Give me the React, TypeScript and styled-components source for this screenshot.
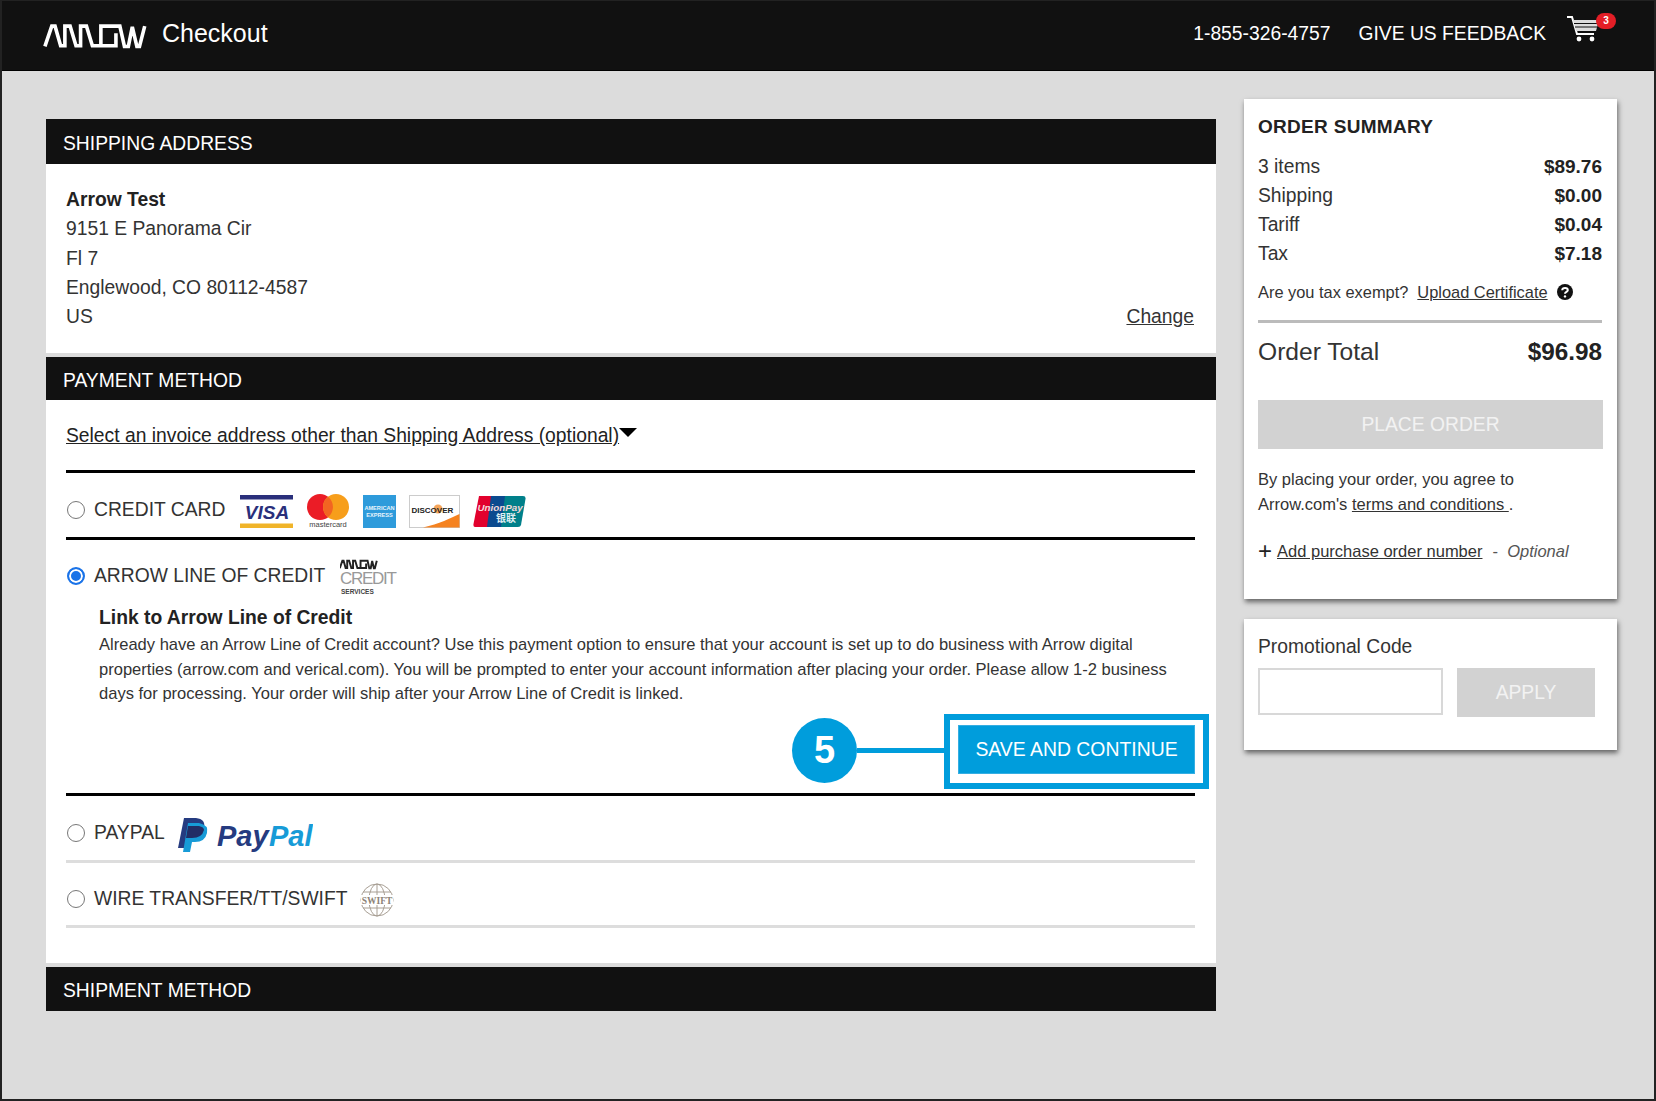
import styled, { createGlobalStyle } from 'styled-components';

const GlobalStyle = createGlobalStyle`
  html, body {
    margin: 0;
    padding: 0;
    background: #dcdcdc;
  }
  * {
    box-sizing: border-box;
  }
`;

const Page = styled.div`
  width: 1656px;
  height: 1101px;
  background: #dcdcdc;
  border: 2px solid #222;
  border-top: 1px solid #222;
  font-family: 'Liberation Sans', Arial, sans-serif;
  color: #333;
  overflow: hidden;
`;

const TopBar = styled.header`
  height: 70px;
  background: #111;
  border-bottom: 1px solid #000;
  display: flex;
  align-items: center;
  padding: 0 38px 4px 38px;
  color: #fff;
`;

const Brand = styled.div`
  font-size: 25px;
  margin-left: 14px;
`;

const TopLinks = styled.div`
  margin-left: auto;
  display: flex;
  align-items: center;
  font-size: 19.3px;
  gap: 28px;
`;

const CartWrap = styled.div`
  position: relative;
  width: 50px;
  height: 34px;
  margin: -4px 0 0 -8px;
`;

const CartBadge = styled.span`
  position: absolute;
  top: -2px;
  right: 0;
  width: 20px;
  height: 16px;
  border-radius: 8px;
  background: #e31e26;
  font-size: 10px;
  font-weight: 700;
  line-height: 16px;
  text-align: center;
  color: #fff;
`;

const Columns = styled.div`
  display: flex;
  align-items: flex-start;
  padding: 28px 0 0 44px;
  gap: 28px;
`;

const MainColumn = styled.main`
  width: 1170px;
  padding-top: 20px;
`;

const SectionBar = styled.h2<{ $height: number }>`
  margin: 0;
  height: ${(p) => p.$height}px;
  background: #111;
  color: #fff;
  font-size: 19.3px;
  font-weight: 400;
  line-height: ${(p) => p.$height}px;
  padding: 2px 0 0 17px;
`;

const Panel = styled.section`
  background: #fff;
  margin-bottom: 4px;
`;

const AddressBody = styled.div`
  position: relative;
  height: 189px;
  padding: 21px 20px 0;
  font-size: 19.3px;
  line-height: 29.3px;
`;

const AddressName = styled.div`
  font-weight: 700;
  color: #222;
`;

const ChangeLink = styled.a`
  position: absolute;
  right: 22px;
  bottom: 22px;
  text-decoration: underline;
  color: #333;
`;

const PaymentBody = styled.div`
  padding: 0 21px 0 20px;
  height: 563px;
`;

const InvoiceRow = styled.div`
  display: flex;
  align-items: flex-start;
  height: 73px;
  padding-top: 25px;
  font-size: 19.3px;
  line-height: 22px;
  border-bottom: 3px solid #000;
  color: #222;
`;

const UnderlineText = styled.a`
  text-decoration: underline;
  color: inherit;
`;

const Caret = styled.span`
  width: 0;
  height: 0;
  margin-top: 3px;
  border-left: 9px solid transparent;
  border-right: 9px solid transparent;
  border-top: 9px solid #000;
`;

const MethodRow = styled.div<{ $line: 'black' | 'grey' | 'none'; $height: number; $pad: number }>`
  display: flex;
  align-items: center;
  height: ${(p) => p.$height}px;
  padding: ${(p) => p.$pad}px 0 0 1px;
  font-size: 19.3px;
  color: #333;
  border-bottom: ${(p) =>
    p.$line === 'black' ? '3px solid #000' : p.$line === 'grey' ? '3px solid #ddd' : 'none'};
`;

const Radio = styled.span<{ $on?: boolean }>`
  flex: none;
  width: 18px;
  height: 18px;
  border-radius: 50%;
  margin-right: 9px;
  background: #fff;
  border: ${(p) => (p.$on ? '2px solid #1a73e8' : '1.5px solid #777')};
  box-shadow: ${(p) => (p.$on ? 'inset 0 0 0 2px #fff' : 'none')};
  ${(p) => (p.$on ? 'background: #1a73e8;' : '')}
`;

const CardIcons = styled.div<{ $left: number }>`
  display: flex;
  align-items: center;
  margin: 3px 0 0 ${(p) => p.$left}px;
  gap: 13px;
`;

const CreditBlock = styled.div`
  padding: 2px 0 0 33px;
  color: #333;
`;

const CreditTitle = styled.div`
  font-size: 19.3px;
  font-weight: 700;
  color: #222;
  line-height: 24px;
  margin-bottom: 3px;
`;

const CreditText = styled.p`
  margin: 0;
  font-size: 16.55px;
  line-height: 24.6px;
  width: 1085px;
`;

const ActionRow = styled.div`
  display: flex;
  justify-content: flex-end;
  height: 89px;
  padding-top: 18px;
  border-bottom: 3px solid #000;
`;

const ButtonHolder = styled.div`
  position: relative;
  height: 49px;
`;

const SaveButton = styled.button`
  display: block;
  width: 237px;
  height: 49px;
  background: #009ddc;
  border: 1px solid #35aee2;
  color: #fff;
  font-family: inherit;
  font-size: 19.4px;
  padding: 0;
`;

const CalloutBox = styled.div`
  position: absolute;
  top: -11px;
  left: -14px;
  width: 265px;
  height: 75px;
  border: 6px solid #009ddc;
`;

const CalloutLine = styled.div`
  position: absolute;
  top: 23px;
  left: -101px;
  width: 87px;
  height: 5px;
  background: #009ddc;
`;

const CalloutDot = styled.div`
  position: absolute;
  top: -7px;
  left: -166px;
  width: 65px;
  height: 65px;
  border-radius: 50%;
  background: #009ddc;
  color: #fff;
  font-size: 38px;
  font-weight: 700;
  line-height: 65px;
  text-align: center;
`;

const Sidebar = styled.aside`
  width: 373px;
  display: flex;
  flex-direction: column;
  gap: 20px;
`;

const Card = styled.div<{ $height: number }>`
  background: #fff;
  height: ${(p) => p.$height}px;
  padding: 0 15px 0 14px;
  box-shadow: 1px 3px 5px rgba(0, 0, 0, 0.55);
`;

const SummaryTitle = styled.h3`
  margin: 0;
  padding-top: 17px;
  font-size: 19px;
  line-height: 22px;
  font-weight: 700;
  letter-spacing: 0.3px;
  color: #222;
  height: 53px;
`;

const SummaryRow = styled.div`
  display: flex;
  justify-content: space-between;
  font-size: 19.3px;
  line-height: 29px;
  color: #333;
`;

const Amount = styled.span`
  font-weight: 700;
  font-size: 19px;
  color: #222;
`;

const TaxRow = styled.div`
  display: flex;
  align-items: center;
  font-size: 16.4px;
  height: 28px;
  margin-top: 10px;
  color: #333;
`;

const TaxLink = styled.a`
  text-decoration: underline;
  margin-left: 9px;
  margin-right: 9px;
`;

const Divider = styled.div`
  height: 3px;
  background: #bbb;
  margin-top: 14px;
`;

const TotalRow = styled.div`
  display: flex;
  justify-content: space-between;
  align-items: center;
  height: 55px;
  padding-top: 3px;
  font-size: 24.6px;
  color: #333;
`;

const TotalAmount = styled.span`
  font-weight: 700;
  font-size: 24.3px;
  color: #222;
`;

const GreyButton = styled.button<{ $width: number }>`
  width: ${(p) => p.$width}px;
  height: 49px;
  background: #d2d2d2;
  border: none;
  padding: 0;
  color: #f2f2f2;
  font-family: inherit;
  font-size: 19.3px;
`;

const PlaceWrap = styled.div`
  margin-top: 22px;
`;

const Terms = styled.div`
  font-size: 16.5px;
  line-height: 25px;
  margin-top: 18px;
  color: #333;
`;

const PurchaseRow = styled.div`
  display: flex;
  align-items: center;
  margin-top: 23px;
  font-size: 16.5px;
  line-height: 22px;
`;

const PlusMark = styled.span`
  font-size: 24px;
  line-height: 20px;
  margin-right: 5px;
  color: #222;
`;

const OptionalText = styled.em`
  color: #555;
  margin-left: 10px;
`;

const Dash = styled.span`
  font-style: normal;
`;

const PromoLabel = styled.div`
  font-size: 19.3px;
  padding-top: 16px;
  line-height: 24px;
  color: #333;
`;

const PromoRow = styled.div`
  display: flex;
  gap: 14px;
  margin-top: 9px;
`;

const PromoInput = styled.input`
  width: 185px;
  height: 47px;
  background: #fff;
  border: 2px solid #d8d8d8;
  padding: 0 8px;
`;

const LOGO_PATH =
  'M15 92L36 30H46L63 90H76V30H92L110 90H124V30H142L160 90H232V52M186 90V30H244L258 92H270L282 32L296 92H304L320 30';

const ArrowLogo = () => (
  <svg width="108" height="35" viewBox="0 0 330 105" fill="none" stroke="#fff" strokeWidth="11">
    <path d={LOGO_PATH} />
  </svg>
);

const CartIcon = () => (
  <svg width="34" height="28" viewBox="0 0 34 28">
    <path d="M1 2H6L11 19H28" fill="none" stroke="#fff" strokeWidth="2" />
    <path d="M7 5H33L30 16H10Z" fill="#ddd" />
    <path d="M8 8.5H32M9 12H31" stroke="#111" strokeWidth="1" />
    <circle cx="13" cy="24" r="2.4" fill="#fff" />
    <circle cx="26" cy="24" r="2.4" fill="#fff" />
  </svg>
);

const VisaIcon = () => (
  <svg width="53" height="33" viewBox="0 0 53 33">
    <rect width="53" height="4.5" fill="#2a2f7b" />
    <rect y="28.5" width="53" height="4.5" fill="#f0b429" />
    <text x="27" y="24" textAnchor="middle" fontFamily="Liberation Sans" fontSize="19" fontWeight="700" fontStyle="italic" fill="#2a2f7b">VISA</text>
  </svg>
);

const MastercardIcon = () => (
  <svg width="44" height="34" viewBox="0 0 44 34">
    <circle cx="14" cy="13" r="13" fill="#eb1c26" />
    <circle cx="30" cy="13" r="13" fill="#f79e1b" />
    <path d="M22 2.8a13 13 0 0 1 0 20.4a13 13 0 0 1 0-20.4Z" fill="#f26522" />
    <text x="22" y="33" textAnchor="middle" fontFamily="Liberation Sans" fontSize="7.5" fill="#444">mastercard</text>
  </svg>
);

const AmexIcon = () => (
  <svg width="33" height="33" viewBox="0 0 33 33">
    <rect width="33" height="33" fill="#2e9bdb" />
    <text x="16.5" y="15" textAnchor="middle" fontFamily="Liberation Sans" fontSize="5.6" fontWeight="700" fill="#e8f4fc">AMERICAN</text>
    <text x="16.5" y="22" textAnchor="middle" fontFamily="Liberation Sans" fontSize="5.6" fontWeight="700" fill="#e8f4fc">EXPRESS</text>
  </svg>
);

const DiscoverIcon = () => (
  <svg width="51" height="33" viewBox="0 0 51 33">
    <rect x="0.5" y="0.5" width="50" height="32" fill="#fff" stroke="#ccc" />
    <path d="M14 32.5C30 29 42 23 50.5 19V32.5Z" fill="#f58220" />
    <circle cx="29" cy="14" r="4.5" fill="#f5a55a" />
    <text x="2.5" y="17.5" fontFamily="Liberation Sans" fontSize="8" fontWeight="700" fill="#222">DISCOVER</text>
  </svg>
);

const UnionPayIcon = () => (
  <svg width="53" height="33" viewBox="0 0 53 33">
    <path d="M6 1H22L18 32H2Q0 32 0.5 29Z" fill="#e2012d" />
    <path d="M18 1H36L32 32H14Z" fill="#0b4a8f" />
    <path d="M32 1H50Q53 1 52.5 4L48 30Q47.5 32 45 32H28Z" fill="#00808a" />
    <text x="27" y="16" textAnchor="middle" fontFamily="Liberation Sans" fontSize="9.8" fontStyle="italic" fontWeight="700" fill="#f3d9d9">UnionPay</text>
    <text x="33" y="27" textAnchor="middle" fontFamily="Noto Sans CJK SC" fontSize="10" fontWeight="700" fill="#dfeef2">银联</text>
  </svg>
);

const CreditLogo = () => (
  <svg width="58" height="36" viewBox="0 0 58 36">
    <svg width="40" height="13" viewBox="0 0 330 105" x="-2" y="-2" fill="none" stroke="#222" strokeWidth="16">
      <path d={LOGO_PATH} />
    </svg>
    <text x="0" y="25" fontFamily="Liberation Sans" fontSize="17" letterSpacing="-1.3" fill="#999">CREDIT</text>
    <text x="1" y="35" fontFamily="Liberation Sans" fontSize="6.5" fontWeight="700" fill="#444">SERVICES</text>
  </svg>
);

const PayPalLogo = () => (
  <svg width="136" height="36" viewBox="0 0 136 36">
    <path d="M7 1H19Q29 2 27 11Q25 21 15 21H11L9 31H1Z" fill="#253b80" />
    <path d="M11 6H22Q32 8 30 16Q28 25 18 25H15L13 35H6Z" fill="#179bd7" />
    <path d="M11 9H22Q27 10 27 13Q25 21 15 21H11L9 21Z" fill="#222d65" />
    <text x="40" y="29" fontFamily="Liberation Sans" fontSize="29" fontWeight="700" fontStyle="italic" fill="#253b80">Pay</text>
    <text x="92" y="29" fontFamily="Liberation Sans" fontSize="29" fontWeight="700" fontStyle="italic" fill="#179bd7">Pal</text>
  </svg>
);

const SwiftLogo = () => (
  <svg width="34" height="34" viewBox="0 0 34 34" fill="none" stroke="#a89f94" strokeWidth="1">
    <circle cx="17" cy="17" r="16" />
    <ellipse cx="17" cy="17" rx="8" ry="16" />
    <path d="M17 1V33M3 9H31M3 25H31" />
    <rect x="1" y="12" width="32" height="10" fill="#fff" stroke="none" />
    <text x="17" y="21" textAnchor="middle" fontFamily="Liberation Serif" fontSize="9.5" fontWeight="700" fill="#8d8378" stroke="none">SWIFT</text>
  </svg>
);

const HelpIcon = () => (
  <svg width="16" height="16" viewBox="0 0 16 16">
    <circle cx="8" cy="8" r="8" fill="#111" />
    <path d="M5.2 6.2C5.4 3.4 10.8 3.4 10.8 6.2C10.8 8 8 7.8 8 9.8" fill="none" stroke="#fff" strokeWidth="2" />
    <circle cx="8" cy="12.4" r="1.2" fill="#fff" />
  </svg>
);

export default function App() {
  return (
    <>
      <GlobalStyle />
      <Page>
        <TopBar>
          <ArrowLogo />
          <Brand>Checkout</Brand>
          <TopLinks>
            <span>1-855-326-4757</span>
            <span>GIVE US FEEDBACK</span>
            <CartWrap>
              <CartIcon />
              <CartBadge>3</CartBadge>
            </CartWrap>
          </TopLinks>
        </TopBar>

        <Columns>
          <MainColumn>
            <Panel>
              <SectionBar $height={45}>SHIPPING ADDRESS</SectionBar>
              <AddressBody>
                <AddressName>Arrow Test</AddressName>
                <div>9151 E Panorama Cir</div>
                <div>Fl 7</div>
                <div>Englewood, CO 80112-4587</div>
                <div>US</div>
                <ChangeLink>Change</ChangeLink>
              </AddressBody>
            </Panel>

            <Panel>
              <SectionBar $height={43}>PAYMENT METHOD</SectionBar>
              <PaymentBody>
                <InvoiceRow>
                  <UnderlineText>Select an invoice address other than Shipping Address (optional)</UnderlineText>
                  <Caret />
                </InvoiceRow>
                <MethodRow $line="black" $height={67} $pad={9}>
                  <Radio />
                  CREDIT CARD
                  <CardIcons $left={15}>
                    <VisaIcon />
                    <MastercardIcon />
                    <AmexIcon />
                    <DiscoverIcon />
                    <UnionPayIcon />
                  </CardIcons>
                </MethodRow>
                <MethodRow $line="none" $height={64} $pad={7}>
                  <Radio $on />
                  ARROW LINE OF CREDIT
                  <CardIcons $left={15}>
                    <CreditLogo />
                  </CardIcons>
                </MethodRow>
                <CreditBlock>
                  <CreditTitle>Link to Arrow Line of Credit</CreditTitle>
                  <CreditText>
                    Already have an Arrow Line of Credit account? Use this payment option to ensure that your account is set up to do business with Arrow digital properties (arrow.com and verical.com). You will be prompted to enter your account information after placing your order. Please allow 1-2 business days for processing. Your order will ship after your Arrow Line of Credit is linked.
                  </CreditText>
                </CreditBlock>
                <ActionRow>
                  <ButtonHolder>
                    <CalloutDot>5</CalloutDot>
                    <CalloutLine />
                    <CalloutBox />
                    <SaveButton>SAVE AND CONTINUE</SaveButton>
                  </ButtonHolder>
                </ActionRow>
                <MethodRow $line="grey" $height={67} $pad={11}>
                  <Radio />
                  PAYPAL
                  <CardIcons $left={12}>
                    <PayPalLogo />
                  </CardIcons>
                </MethodRow>
                <MethodRow $line="grey" $height={65} $pad={10}>
                  <Radio />
                  WIRE TRANSFER/TT/SWIFT
                  <CardIcons $left={12}>
                    <SwiftLogo />
                  </CardIcons>
                </MethodRow>
              </PaymentBody>
            </Panel>

            <SectionBar $height={44}>SHIPMENT METHOD</SectionBar>
          </MainColumn>

          <Sidebar>
            <Card $height={500}>
              <SummaryTitle>ORDER SUMMARY</SummaryTitle>
              <SummaryRow><span>3 items</span><Amount>$89.76</Amount></SummaryRow>
              <SummaryRow><span>Shipping</span><Amount>$0.00</Amount></SummaryRow>
              <SummaryRow><span>Tariff</span><Amount>$0.04</Amount></SummaryRow>
              <SummaryRow><span>Tax</span><Amount>$7.18</Amount></SummaryRow>
              <TaxRow>
                Are you tax exempt?
                <TaxLink>Upload Certificate</TaxLink>
                <HelpIcon />
              </TaxRow>
              <Divider />
              <TotalRow><span>Order Total</span><TotalAmount>$96.98</TotalAmount></TotalRow>
              <PlaceWrap>
                <GreyButton $width={345}>PLACE ORDER</GreyButton>
              </PlaceWrap>
              <Terms>
                By placing your order, you agree to
                <br />
                Arrow.com's <UnderlineText>terms and conditions </UnderlineText>.
              </Terms>
              <PurchaseRow>
                <PlusMark>+</PlusMark>
                <UnderlineText>Add purchase order number</UnderlineText>
                <OptionalText><Dash>-</Dash>&nbsp; Optional</OptionalText>
              </PurchaseRow>
            </Card>
            <Card $height={131}>
              <PromoLabel>Promotional Code</PromoLabel>
              <PromoRow>
                <PromoInput aria-label="Promotional Code" />
                <GreyButton $width={138}>APPLY</GreyButton>
              </PromoRow>
            </Card>
          </Sidebar>
        </Columns>
      </Page>
    </>
  );
}
